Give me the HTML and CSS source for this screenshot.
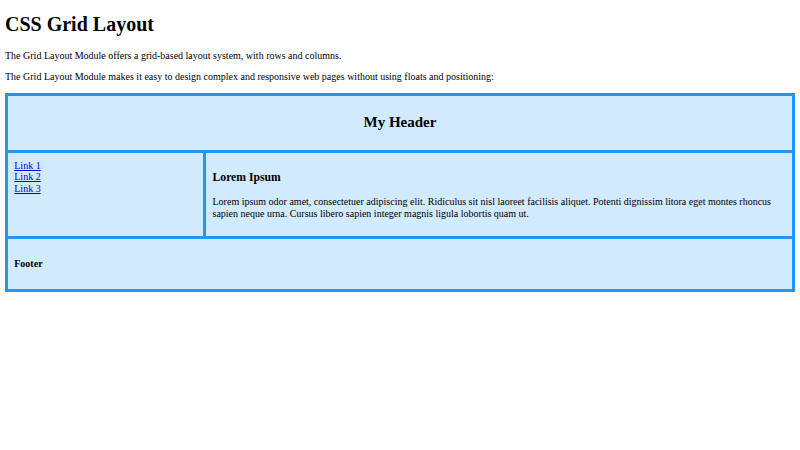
FILE: index.html
```html
<!DOCTYPE html>
<html>
<head>
<meta charset="utf-8">
<title>CSS Grid Layout</title>
<link rel="stylesheet" href="styles.css">
</head>
<body>
<h1>CSS Grid Layout</h1>
<p>The Grid Layout Module offers a grid-based layout system, with rows and columns.</p>
<p>The Grid Layout Module makes it easy to design complex and responsive web pages without using floats and positioning:</p>
<div class="grid-container">
  <div class="cell header"><h2>My Header</h2></div>
  <div class="cell menu">
    <a href="#">Link 1</a><br>
    <a href="#">Link 2</a><br>
    <a href="#">Link 3</a>
  </div>
  <div class="cell main">
    <h3>Lorem Ipsum</h3>
    <p>Lorem ipsum odor amet, consectetuer adipiscing elit. Ridiculus sit nisl laoreet facilisis aliquet. Potenti dignissim litora eget montes rhoncus sapien neque urna. Cursus libero sapien integer magnis ligula lobortis quam ut.</p>
  </div>
  <div class="cell footer"><h4>Footer</h4></div>
</div>
</body>
</html>
```
FILE: styles.css
```css
html {
  font-family: "Liberation Serif", "Times New Roman", serif;
  font-size: 10px;
  line-height: 1.15;
}
body {
  margin: 0 5px 5px 5px;
  font-size: 10px;
  line-height: 1.15;
  color: #000;
  background: #fff;
}
h1 {
  font-size: 20px;
  margin: 13.4px 0;
}
p {
  margin: 10px 0;
}
.grid-container {
  display: grid;
  grid-template-columns: 1fr 3fr;
  grid-template-areas:
    "header header"
    "menu main"
    "footer footer";
  gap: 3px;
  padding: 3px;
  background-color: #2196F3;
}
.cell {
  background-color: rgba(255, 255, 255, 0.8);
  padding: 6.25px;
}
.header {
  grid-area: header;
  text-align: center;
}
.header h2 {
  font-size: 15px;
  margin: 12.45px 0;
}
.menu { grid-area: menu; }
.menu a { color: #0000EE; }
.main { grid-area: main; }
.main h3 {
  font-size: 11.7px;
  margin: 11.7px 0;
}
.footer { grid-area: footer; }
.footer h4 {
  font-size: 10px;
  margin: 13.3px 0;
}
```
